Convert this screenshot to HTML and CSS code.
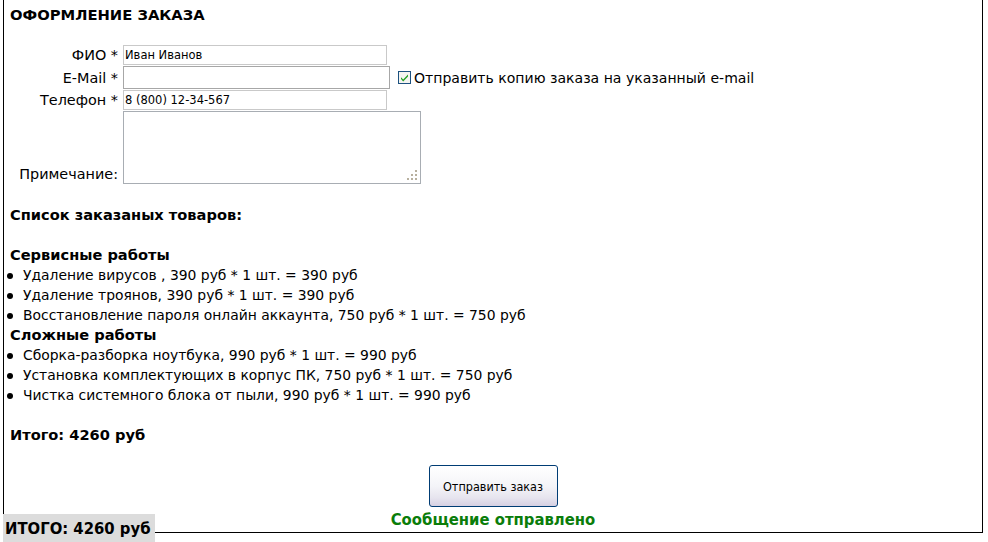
FILE: index.html
```html
<!DOCTYPE html>
<html lang="ru">
<head>
<meta charset="utf-8">
<title>Оформление заказа</title>
<link rel="stylesheet" href="styles.css">
</head>
<body>
<div class="page">
  <div class="title">ОФОРМЛЕНИЕ ЗАКАЗА</div>
  <form class="form">
    <label class="lbl" for="fio">ФИО *</label>
    <div class="field"><input id="fio" class="inp" type="text" value="Иван Иванов"></div>
    <label class="lbl" for="mail">E-Mail *</label>
    <div class="field">
      <input id="mail" class="inp inp-mail" type="text" value="">
      <span class="chk">
        <svg width="13" height="13" viewBox="0 0 13 13">
          <rect x="0.5" y="0.5" width="12" height="12" fill="#f4f4f0" stroke="#1c5180"/>
          <path d="M3 6.2 L5.2 8.6 L10 3.6 L10 5.4 L5.2 10.4 L3 8 Z" fill="#21a121"/>
        </svg>
        <span class="chk-text">Отправить копию заказа на указанный e-mail</span>
      </span>
    </div>
    <label class="lbl" for="tel">Телефон *</label>
    <div class="field"><input id="tel" class="inp" type="text" value="8 (800) 12-34-567"></div>
    <label class="lbl lbl-note" for="note">Примечание:</label>
    <div class="field note-wrap">
      <textarea id="note" class="note"></textarea>
      <svg class="grip" width="11" height="11" viewBox="0 0 11 11">
        <rect x="8" y="0" width="2" height="2" fill="#b8b09f"/>
        <rect x="4" y="4" width="2" height="2" fill="#b8b09f"/>
        <rect x="8" y="4" width="2" height="2" fill="#b8b09f"/>
        <rect x="0" y="8" width="2" height="2" fill="#b8b09f"/>
        <rect x="4" y="8" width="2" height="2" fill="#b8b09f"/>
        <rect x="8" y="8" width="2" height="2" fill="#b8b09f"/>
      </svg>
    </div>
  </form>

  <div class="list">
    <div class="b">Список заказаных товаров:</div>
    <div class="blank"></div>
    <div class="b">Сервисные работы</div>
    <div class="item"><span class="dot"></span>Удаление вирусов , 390 руб * 1 шт. = 390 руб</div>
    <div class="item"><span class="dot"></span>Удаление троянов, 390 руб * 1 шт. = 390 руб</div>
    <div class="item"><span class="dot"></span>Восстановление пароля онлайн аккаунта, 750 руб * 1 шт. = 750 руб</div>
    <div class="b">Сложные работы</div>
    <div class="item"><span class="dot"></span>Сборка-разборка ноутбука, 990 руб * 1 шт. = 990 руб</div>
    <div class="item"><span class="dot"></span>Установка комплектующих в корпус ПК, 750 руб * 1 шт. = 750 руб</div>
    <div class="item"><span class="dot"></span>Чистка системного блока от пыли, 990 руб * 1 шт. = 990 руб</div>
    <div class="blank"></div>
    <div class="b">Итого: 4260 руб</div>
  </div>

  <div class="actions">
    <button class="btn" type="button">Отправить заказ</button>
    <div class="msg">Сообщение отправлено</div>
  </div>
</div>
<div class="badge">ИТОГО: 4260 руб</div>
</body>
</html>
```

FILE: styles.css
```css
html, body {
  margin: 0;
  padding: 0;
  background: #fff;
}
body {
  font-family: "DejaVu Sans", Verdana, sans-serif;
  font-size: 13.9px;
  line-height: 20px;
  color: #000;
}
.page {
  margin-left: 3px;
  width: 980px;
  box-sizing: border-box;
  border-left: 1px solid #000;
  border-right: 1px solid #000;
  border-bottom: 1px solid #000;
  padding: 5px 6px 2px 6px;
}
.title {
  font-weight: bold;
  font-size: 14.75px;
  height: 20px;
}
.form {
  display: grid;
  grid-template-columns: 108px auto;
  column-gap: 5px;
  row-gap: 1px;
  margin-top: 20px;
}
.lbl {
  text-align: right;
  align-self: center;
  white-space: nowrap;
  font-size: 14.4px;
}
.lbl-note {
  align-self: end;
  line-height: 20px;
}
.field {
  display: flex;
  align-items: center;
}
.inp {
  box-sizing: border-box;
  width: 264px;
  height: 20px;
  margin: 0;
  padding: 0 1px;
  border: 1px solid #c9c9c9;
  font-family: "DejaVu Sans", Verdana, sans-serif;
  font-size: 11.5px;
  color: #000;
  outline: none;
}
.inp-mail {
  width: 267px;
  height: 23px;
  border-color: #a7a7a7;
}
.chk {
  display: inline-flex;
  align-items: center;
  margin-left: 8px;
  gap: 3px;
}
.chk svg {
  display: block;
}
.chk-text {
  font-size: 14.05px;
}
.note-wrap {
  position: relative;
  width: 298px;
}
.note {
  display: block;
  box-sizing: border-box;
  width: 298px;
  height: 73px;
  margin: 0;
  border: 1px solid #a8adb3;
  resize: none;
  font-family: "DejaVu Sans", Verdana, sans-serif;
  font-size: 12px;
}
.grip {
  position: absolute;
  right: 3px;
  bottom: 3px;
}
.list {
  margin-top: 21px;
}
.b {
  font-weight: bold;
  font-size: 14.6px;
}
.blank {
  height: 20px;
}
.item {
  margin-left: -3px;
  display: flex;
  align-items: center;
}
.dot {
  display: inline-block;
  width: 6px;
  height: 6px;
  border-radius: 50%;
  background: #000;
  margin-right: 10px;
  margin-top: 2px;
}
.actions {
  display: flex;
  flex-direction: column;
  align-items: center;
  margin-top: 20px;
}
.btn {
  width: 129px;
  height: 42px;
  box-sizing: border-box;
  border: 1px solid #003c74;
  border-radius: 3px;
  background: linear-gradient(#ffffff 0%, #f4f4f8 50%, #e6e4ee 80%, #d6d0e2 100%);
  font-family: "DejaVu Sans Condensed", "DejaVu Sans", sans-serif;
  font-size: 12.5px;
  color: #000;
  padding: 0;
}
.msg {
  margin-top: 3px;
  color: #0a7d0a;
  font-family: "DejaVu Sans Condensed", "DejaVu Sans", sans-serif;
  font-weight: bold;
  font-size: 16.5px;
  line-height: 20px;
}
.badge {
  position: fixed;
  left: 3px;
  bottom: 0;
  width: 152px;
  height: 28px;
  background: #dcdcdc;
  font-family: "DejaVu Sans Condensed", "DejaVu Sans", sans-serif;
  font-weight: bold;
  font-size: 16.5px;
  line-height: 30px;
  padding-left: 2px;
  box-sizing: border-box;
  white-space: nowrap;
}
```
